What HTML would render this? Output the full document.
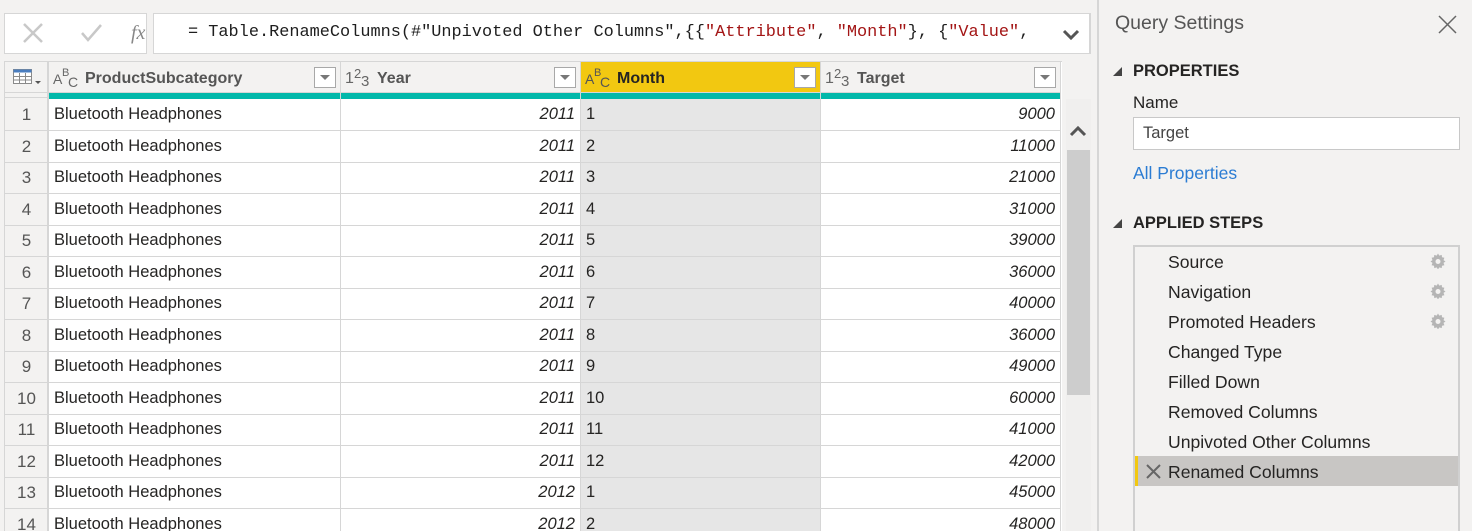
<!DOCTYPE html>
<html><head><style>
*{margin:0;padding:0;box-sizing:border-box}
html,body{width:1472px;height:531px;overflow:hidden}
body{background:#f3f2f1;font-family:"Liberation Sans",sans-serif;position:relative;color:#252423}
.a{position:absolute}
.cell{position:absolute;height:31px;line-height:31px;font-size:16.5px;white-space:nowrap;overflow:hidden}
.hl{position:absolute;background:#d6d6d6}
.dd{position:absolute;top:67px;width:22px;height:21px;border:1px solid #a8a8a8;background:#fff}
.dd:after{content:"";position:absolute;left:5px;top:7px;border-left:5px solid transparent;border-right:5px solid transparent;border-top:5px solid #777}
.hd{position:absolute;top:64px;height:30px;line-height:30px;font-size:16px;font-weight:bold;color:#555;white-space:nowrap}
.ty{display:inline-block;position:relative;width:24px;height:20px;vertical-align:middle;font-weight:normal;color:#666;margin-right:8px;top:-2px}
.ty b{position:absolute;font-weight:normal;line-height:1}
.step{position:absolute;left:1168px;font-size:17.6px;color:#252423;height:30px;line-height:30px;white-space:nowrap}
.gear{position:absolute;left:1430px}
</style></head><body>
<div class="a" style="left:4px;top:13px;width:143px;height:41px;background:#fff;border:1px solid #d6d6d6"></div>
<svg class="a" style="left:22px;top:22px" width="140" height="22"><path d="M2 2 L20 20 M20 2 L2 20" stroke="#c8c8c8" stroke-width="2.5"/><path d="M60 11 L66 18 L79 3" stroke="#c8c8c8" stroke-width="2.5" fill="none"/><text x="109" y="17" font-family="Liberation Serif" font-style="italic" font-size="20" fill="#888">fx</text></svg>
<div class="a" style="left:153px;top:13px;width:937px;height:41px;background:#fff;border:1px solid #d6d6d6;border-right:none"></div>
<div class="a" style="left:1089px;top:13px;width:2px;height:41px;background:#d6d6d6"></div>
<div class="a" style="left:188px;top:22px;font-family:'Liberation Mono',monospace;font-size:16.9px;line-height:22px;color:#1e1e1e;white-space:pre">= Table.RenameColumns(#"Unpivoted Other Columns",{{<span style="color:#a31515">"Attribute"</span>, <span style="color:#a31515">"Month"</span>}, {<span style="color:#a31515">"Value"</span>,</div>
<svg class="a" style="left:1062px;top:28px" width="20" height="14"><path d="M2 3 L9 10 L16 3" stroke="#555" stroke-width="3" fill="none"/></svg>

<div class="a" style="left:4px;top:61px;width:1058px;height:470px;background:#fff;border-left:1px solid #d6d6d6;border-top:1px solid #d6d6d6"></div>
<div class="a" style="left:5px;top:62px;width:43px;height:469px;background:#f3f2f1"></div>
<div class="a" style="left:48px;top:62px;width:1012px;height:30px;background:#f3f2f1"></div>
<div class="a" style="left:581px;top:62px;width:239px;height:30px;background:#f2c811"></div>
<div class="a" style="left:581px;top:99px;width:239px;height:432px;background:#e6e6e6"></div>
<div class="a" style="left:48px;top:93px;width:1012px;height:6px;background:#01b8aa"></div>
<div class="hl" style="left:5px;top:92px;width:1056px;height:1px"></div>
<div class="hl" style="left:5px;top:97px;width:43px;height:1px"></div>
<div class="hl" style="left:47px;top:62px;width:2px;height:469px"></div>
<div class="hl" style="left:340px;top:62px;width:1px;height:469px"></div>
<div class="hl" style="left:580px;top:62px;width:1px;height:469px"></div>
<div class="hl" style="left:820px;top:62px;width:1px;height:469px"></div>
<div class="hl" style="left:1060px;top:62px;width:1px;height:469px"></div>
<svg class="a" style="left:13px;top:69px" width="30" height="18"><rect x="0.5" y="0.5" width="18" height="14" fill="#fff" stroke="#8a8a8a"/><rect x="0.5" y="0.5" width="18" height="3" fill="#4a7dbf"/><path d="M0 7.5H19M0 11H19M6.5 4V15M12.5 4V15" stroke="#8a8a8a"/><path d="M22 12 L28 12 L25 15Z" fill="#555"/></svg>
<div class="hd" style="left:53px"><span class="ty"><b style="left:0;top:5px;font-size:14px">A</b><b style="left:9px;top:1px;font-size:11px">B</b><b style="left:15px;top:8px;font-size:14px">C</b></span>ProductSubcategory</div>
<div class="dd" style="left:314px"></div>
<div class="hd" style="left:345px"><span class="ty"><b style="left:0;top:4px;font-size:16px">1</b><b style="left:9px;top:0;font-size:13px">2</b><b style="left:16px;top:7px;font-size:15px">3</b></span>Year</div>
<div class="dd" style="left:554px"></div>
<div class="hd" style="left:585px;color:#252423"><span class="ty"><b style="left:0;top:5px;font-size:14px;color:#555">A</b><b style="left:9px;top:1px;font-size:11px;color:#555">B</b><b style="left:15px;top:8px;font-size:14px;color:#555">C</b></span>Month</div>
<div class="dd" style="left:794px"></div>
<div class="hd" style="left:825px"><span class="ty"><b style="left:0;top:4px;font-size:16px">1</b><b style="left:9px;top:0;font-size:13px">2</b><b style="left:16px;top:7px;font-size:15px">3</b></span>Target</div>
<div class="dd" style="left:1034px"></div>

<div id="rows"></div>
<script>
var t=[9000,11000,21000,31000,39000,36000,40000,36000,49000,60000,41000,42000,45000,48000];
var h='';
for(var i=0;i<14;i++){
 var y=99+31.5*i;
 h+='<div class="hl" style="left:5px;top:'+(y+31)+'px;width:1056px;height:1px"></div>';
 h+='<div class="cell" style="left:5px;width:43px;text-align:center;color:#555;font-size:17px;top:'+y+'px">'+(i+1)+'</div>';
 h+='<div class="cell" style="left:54px;top:'+y+'px">Bluetooth Headphones</div>';
 h+='<div class="cell" style="left:341px;width:234px;text-align:right;font-style:italic;top:'+y+'px">'+(i<12?2011:2012)+'</div>';
 h+='<div class="cell" style="left:586px;top:'+y+'px">'+(i<12?i+1:i-11)+'</div>';
 h+='<div class="cell" style="left:821px;width:234px;text-align:right;font-style:italic;top:'+y+'px">'+t[i]+'</div>';
}
document.getElementById('rows').innerHTML=h;
</script>

<div class="a" style="left:1066px;top:99px;width:25px;height:432px;background:#f0efee"></div>
<svg class="a" style="left:1069px;top:124px" width="20" height="14"><path d="M2 11 L9 4 L16 11" stroke="#555" stroke-width="3" fill="none"/></svg>
<div class="a" style="left:1067px;top:150px;width:23px;height:245px;background:#cdcdcd"></div>

<div class="a" style="left:1097px;top:0;width:2px;height:531px;background:#d6d6d6"></div>
<div class="a" style="left:1115px;top:12px;font-size:19.5px;color:#555">Query Settings</div>
<svg class="a" style="left:1438px;top:15px" width="20" height="20"><path d="M1 1L18 18M18 1L1 18" stroke="#666" stroke-width="1.5"/></svg>
<svg class="a" style="left:1113px;top:67px" width="10" height="10"><path d="M9 0V9H0Z" fill="#444"/></svg>
<div class="a" style="left:1133px;top:62px;font-size:16.5px;font-weight:bold;color:#252423">PROPERTIES</div>
<div class="a" style="left:1133px;top:93px;font-size:17px">Name</div>
<div class="a" style="left:1133px;top:117px;width:327px;height:33px;background:#fff;border:1px solid #c8c8c8;padding-left:9px;line-height:31px;font-size:16.5px;color:#444">Target</div>
<div class="a" style="left:1133px;top:163px;font-size:17.5px;color:#2b7cd3">All Properties</div>
<svg class="a" style="left:1113px;top:219px" width="10" height="10"><path d="M9 0V9H0Z" fill="#444"/></svg>
<div class="a" style="left:1133px;top:214px;font-size:16.5px;font-weight:bold;color:#252423">APPLIED STEPS</div>
<div class="a" style="left:1133px;top:245px;width:327px;height:290px;background:#f3f2f1;border:2px solid #d0d0d0"></div>
<div class="a" style="left:1135px;top:456px;width:323px;height:30px;background:#c8c6c4;border-left:3px solid #f2c811"></div>
<svg class="a" style="left:1146px;top:464px" width="16" height="16"><path d="M1 1L14 14M14 1L1 14" stroke="#666" stroke-width="2"/></svg>
<div class="step" style="top:247px">Source</div>
<div class="step" style="top:277px">Navigation</div>
<div class="step" style="top:307px">Promoted Headers</div>
<div class="step" style="top:337px">Changed Type</div>
<div class="step" style="top:367px">Filled Down</div>
<div class="step" style="top:397px">Removed Columns</div>
<div class="step" style="top:427px">Unpivoted Other Columns</div>
<div class="step" style="top:457px">Renamed Columns</div>
<svg class="gear" style="top:253px" width="16" height="16" viewBox="0 0 16 16"><path d="M8 0.5L9.3 2.6 11.7 1.9 12 4.3 14.4 4.8 13.5 7.1 15.5 8.5 13.5 9.9 14.4 12.2 12 12.7 11.7 15.1 9.3 14.4 8 16.5 6.7 14.4 4.3 15.1 4 12.7 1.6 12.2 2.5 9.9 0.5 8.5 2.5 7.1 1.6 4.8 4 4.3 4.3 1.9 6.7 2.6Z" fill="#b5b5b5"/><circle cx="8" cy="8.5" r="2.5" fill="#f3f2f1"/></svg>
<svg class="gear" style="top:283px" width="16" height="16" viewBox="0 0 16 16"><path d="M8 0.5L9.3 2.6 11.7 1.9 12 4.3 14.4 4.8 13.5 7.1 15.5 8.5 13.5 9.9 14.4 12.2 12 12.7 11.7 15.1 9.3 14.4 8 16.5 6.7 14.4 4.3 15.1 4 12.7 1.6 12.2 2.5 9.9 0.5 8.5 2.5 7.1 1.6 4.8 4 4.3 4.3 1.9 6.7 2.6Z" fill="#b5b5b5"/><circle cx="8" cy="8.5" r="2.5" fill="#f3f2f1"/></svg>
<svg class="gear" style="top:313px" width="16" height="16" viewBox="0 0 16 16"><path d="M8 0.5L9.3 2.6 11.7 1.9 12 4.3 14.4 4.8 13.5 7.1 15.5 8.5 13.5 9.9 14.4 12.2 12 12.7 11.7 15.1 9.3 14.4 8 16.5 6.7 14.4 4.3 15.1 4 12.7 1.6 12.2 2.5 9.9 0.5 8.5 2.5 7.1 1.6 4.8 4 4.3 4.3 1.9 6.7 2.6Z" fill="#b5b5b5"/><circle cx="8" cy="8.5" r="2.5" fill="#f3f2f1"/></svg>
</body></html>
